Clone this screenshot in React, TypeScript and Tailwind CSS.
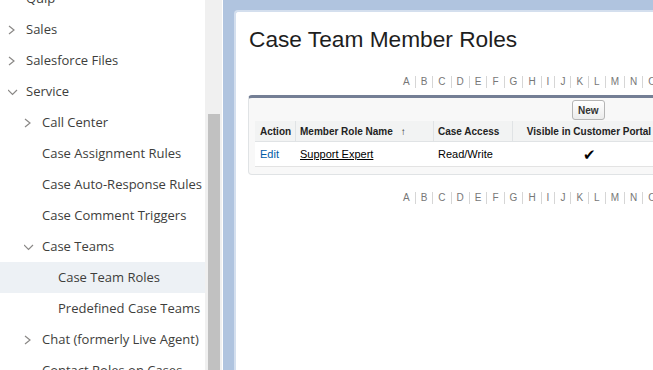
import React from "react";

type Item = { label: string; level: number; chev?: "right" | "down"; active?: boolean };

const items: Item[] = [
  { label: "Quip", level: 1 },
  { label: "Sales", level: 1, chev: "right" },
  { label: "Salesforce Files", level: 1, chev: "right" },
  { label: "Service", level: 1, chev: "down" },
  { label: "Call Center", level: 2, chev: "right" },
  { label: "Case Assignment Rules", level: 2 },
  { label: "Case Auto-Response Rules", level: 2 },
  { label: "Case Comment Triggers", level: 2 },
  { label: "Case Teams", level: 2, chev: "down" },
  { label: "Case Team Roles", level: 3, active: true },
  { label: "Predefined Case Teams", level: 3 },
  { label: "Chat (formerly Live Agent)", level: 2, chev: "right" },
  { label: "Contact Roles on Cases", level: 2 },
];

const letters = ["A", "B", "C", "D", "E", "F", "G", "H", "I", "J", "K", "L", "M", "N", "O", "P", "Q"];

function Chevron({ dir }: { dir?: "right" | "down" }) {
  return (
    <div className="w-[18px] h-[10px] shrink-0">
      {dir === "right" && (
        <svg width="10" height="10" viewBox="0 0 10 10">
          <polyline points="1,1 6,5 1,9" fill="none" stroke="#8a8886" strokeWidth="1.2" />
        </svg>
      )}
      {dir === "down" && (
        <svg width="10" height="10" viewBox="0 0 10 10">
          <polyline points="0,3 4.5,7.5 9,3" fill="none" stroke="#8a8886" strokeWidth="1.2" />
        </svg>
      )}
    </div>
  );
}

function AlphaBar() {
  return (
    <div className="flex ml-[150px] text-[10px] leading-[12px] text-[#777] whitespace-nowrap" style={{ fontFamily: "Arial, 'Liberation Sans', sans-serif" }}>
      {letters.map((l) => (
        <span key={l} className="px-[5px] border-r border-[#d6d6d6]">
          {l}
        </span>
      ))}
    </div>
  );
}

export default function App() {
  const pl = ["pl-[8px]", "pl-[24px]", "pl-[40px]"];
  return (
    <div className="w-[653px] h-[370px] overflow-hidden flex bg-white">
      <div className="w-[205px] shrink-0 overflow-hidden" style={{ fontFamily: "'Open Sans', sans-serif" }}>
        <div className="-mt-[17px] flex flex-col">
          {items.map((it) => (
            <div
              key={it.label}
              className={`h-[31px] flex items-center ${pl[it.level - 1]} text-[13px] text-[#3e3e3c] whitespace-nowrap ${it.active ? "bg-[#edf1f5]" : ""}`}
            >
              <Chevron dir={it.chev} />
              <span>{it.label}</span>
            </div>
          ))}
        </div>
      </div>
      <div className="w-[17px] shrink-0 bg-[#f0f0f0] flex flex-col">
        <div className="h-[114px]" />
        <div className="flex-1 ml-[3px] mr-[2px] bg-[#c1c1c1]" />
      </div>
      <div className="flex-1 min-w-0 border-l border-white bg-[#b0c4df] pl-[11px] pt-[10px] flex">
        <div className="flex-1 min-w-0 bg-white rounded-tl-[4px] border-l-2 border-t-2 border-[#d4dfee] pl-[12px] pt-[14px]" style={{ fontFamily: "Arial, 'Liberation Sans', sans-serif" }}>
          <div className="w-[700px]">
            <h1 className="text-[22.7px] leading-[26px] text-[#1e1e1e] ml-[1px]">Case Team Member Roles</h1>
            <div className="mt-[24px]">
              <AlphaBar />
            </div>
            <div className="mt-[7px] w-[480px] bg-[#f8f8f8] border border-[#e0e3e5] border-t-[3px] border-t-[#747f95] rounded-[4px] px-[6px] pb-[7px]">
              <div className="pt-[2px] pb-[1px] flex">
                <button className="ml-[317px] h-[20px] px-[5px] rounded-[3px] border border-[#b5b5b5] bg-[linear-gradient(#ffffff,#ececec)] text-[10px] font-bold text-[#333]">
                  New
                </button>
              </div>
              <div className="flex h-[21px] items-center bg-[#f2f3f3] border-b border-[#e0e3e5] text-[10px] font-bold text-[#222] whitespace-nowrap">
                <div className="w-[41px] h-full flex items-center pl-[5px] border-r border-[#e0e3e5]">Action</div>
                <div className="w-[138px] h-full flex items-center pl-[4px] border-r border-[#e0e3e5]">
                  Member Role Name <span className="ml-[8px] text-[10px]">↑</span>
                </div>
                <div className="w-[79px] h-full flex items-center pl-[4px] border-r border-[#e0e3e5]">Case Access</div>
                <div className="w-[152px] h-full flex items-center justify-center">Visible in Customer Portal</div>
              </div>
              <div className="flex h-[25px] items-center bg-white border-b border-[#e3e3e3] text-[11px] text-[#000] whitespace-nowrap">
                <div className="w-[41px] pl-[5px] text-[#015ba7]">Edit</div>
                <div className="w-[138px] pl-[4px] underline">Support Expert</div>
                <div className="w-[79px] pl-[4px]">Read/Write</div>
                <div className="w-[152px] flex justify-center text-[15px] leading-[15px]">✔</div>
              </div>
            </div>
            <div className="mt-[17px]">
              <AlphaBar />
            </div>
          </div>
        </div>
      </div>
    </div>
  );
}
